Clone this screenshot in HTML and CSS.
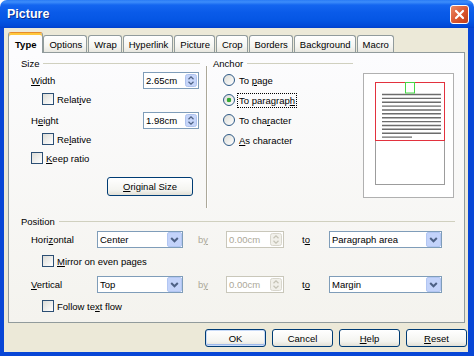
FILE: index.html
```html
<!DOCTYPE html>
<html>
<head>
	<link rel="stylesheet" href="styles.css">
</head>
<body>
	<div class="window">
		<div class="titlebar">
			<span class="title">Picture</span>
			<span class="closeBtn">
				<svg width="17" height="17" viewBox="0 0 17 17"><path d="M5 5L12 12M12 5L5 12" stroke="#fff" stroke-width="2.2" stroke-linecap="round"/></svg>
			</span>
		</div>

		<div class="frame">
			<div class="tabs">
				<div class="tab active">Type</div>
				<div class="tab">Options</div>
				<div class="tab">Wrap</div>
				<div class="tab">Hyperlink</div>
				<div class="tab">Picture</div>
				<div class="tab">Crop</div>
				<div class="tab">Borders</div>
				<div class="tab">Background</div>
				<div class="tab">Macro</div>
			</div>

			<div class="panel">
				<div class="topPart">
					<div class="sizeGroup">
						<div class="groupHead"><span>Size</span><span class="rule"></span></div>
						<div class="fieldRow firstField">
							<span class="fieldLabel"><u>W</u>idth</span>
							<div class="spin">
								<span>2.65cm</span>
								<svg width="12" height="13" viewBox="0 0 12 13"><rect x=".5" y=".5" width="11" height="12" rx="2" fill="#C6D5F9" stroke="#AEC2EE"/><path d="M3.5 5.2L6 2.8L8.5 5.2M3.5 7.8L6 10.2L8.5 7.8" fill="none" stroke="#4D6185" stroke-width="1.2"/></svg>
							</div>
						</div>
						<div class="check subCheck firstCheck"><span class="box"></span><span>Relat<u>i</u>ve</span></div>
						<div class="fieldRow secondField">
							<span class="fieldLabel">H<u>e</u>ight</span>
							<div class="spin">
								<span>1.98cm</span>
								<svg width="12" height="13" viewBox="0 0 12 13"><rect x=".5" y=".5" width="11" height="12" rx="2" fill="#C6D5F9" stroke="#AEC2EE"/><path d="M3.5 5.2L6 2.8L8.5 5.2M3.5 7.8L6 10.2L8.5 7.8" fill="none" stroke="#4D6185" stroke-width="1.2"/></svg>
							</div>
						</div>
						<div class="check subCheck firstCheck"><span class="box"></span><span>Re<u>l</u>ative</span></div>
						<div class="check ratioCheck"><span class="box"></span><span><u>K</u>eep ratio</span></div>
						<div class="btn origBtn"><span><u>O</u>riginal Size</span></div>
					</div>

					<div class="separator"></div>

					<div class="anchorGroup">
						<div class="groupHead"><span>Anchor</span><span class="rule"></span></div>
						<div class="radioRow"><span class="radio"></span><span>To <u>p</u>age</span></div>
						<div class="radioRow"><span class="radio on"></span><span class="focus">To paragrap<u>h</u></span></div>
						<div class="radioRow"><span class="radio"></span><span>To cha<u>r</u>acter</span></div>
						<div class="radioRow"><span class="radio"></span><span><u>A</u>s character</span></div>
					</div>

					<div class="preview">
						<svg width="89" height="123" viewBox="0 0 89 123">
							<rect x="11.5" y="8.5" width="69" height="102" fill="#fff" stroke="#9C9C9C"/>
							<path d="M18 20.5H77M18 24.4H77M18 28.2H77M18 32.1H77M18 36H77M18 39.8H77M18 43.7H77M18 47.6H77M18 51.5H77M18 55.3H77M18 59.2H77M18 63.1H48" stroke="#6C6C6C" stroke-width="1.4"/>
							<rect x="11.5" y="8.5" width="69" height="58" fill="none" stroke="#E2323E"/>
							<rect x="41.5" y="8.5" width="9" height="10.5" fill="none" stroke="#46D846"/>
						</svg>
					</div>
				</div>

				<div class="posGroup">
					<div class="groupHead"><span>Position</span><span class="rule"></span></div>
					<div class="posRow firstPos">
						<span class="posLabel">Hori<u>z</u>ontal</span>
						<div class="combo shortCombo">
							<span>Center</span>
							<svg width="15" height="15" viewBox="0 0 15 15"><rect x=".5" y=".5" width="14" height="14" rx="1.5" fill="#C3D3FA" stroke="#B2C6F2"/><path d="M4.2 6L7.5 9.3L10.8 6" fill="none" stroke="#4D6185" stroke-width="2"/></svg>
						</div>
						<span class="byLabel">b<u>y</u></span>
						<div class="spin disabled">
							<span>0.00cm</span>
							<svg width="12" height="13" viewBox="0 0 12 13"><rect x=".5" y=".5" width="11" height="12" rx="2" fill="#F1F0EA" stroke="#D8D6CC"/><path d="M3.5 5.2L6 2.8L8.5 5.2M3.5 7.8L6 10.2L8.5 7.8" fill="none" stroke="#C4C2B6" stroke-width="1.2"/></svg>
						</div>
						<span class="toLabel">t<u>o</u></span>
						<div class="combo longCombo">
							<span>Paragraph area</span>
							<svg width="15" height="15" viewBox="0 0 15 15"><rect x=".5" y=".5" width="14" height="14" rx="1.5" fill="#C3D3FA" stroke="#B2C6F2"/><path d="M4.2 6L7.5 9.3L10.8 6" fill="none" stroke="#4D6185" stroke-width="2"/></svg>
						</div>
					</div>
					<div class="check subCheck mirrorCheck"><span class="box"></span><span><u>M</u>irror on even pages</span></div>
					<div class="posRow secondPos">
						<span class="posLabel"><u>V</u>ertical</span>
						<div class="combo shortCombo">
							<span>Top</span>
							<svg width="15" height="15" viewBox="0 0 15 15"><rect x=".5" y=".5" width="14" height="14" rx="1.5" fill="#C3D3FA" stroke="#B2C6F2"/><path d="M4.2 6L7.5 9.3L10.8 6" fill="none" stroke="#4D6185" stroke-width="2"/></svg>
						</div>
						<span class="byLabel">b<u>y</u></span>
						<div class="spin disabled">
							<span>0.00cm</span>
							<svg width="12" height="13" viewBox="0 0 12 13"><rect x=".5" y=".5" width="11" height="12" rx="2" fill="#F1F0EA" stroke="#D8D6CC"/><path d="M3.5 5.2L6 2.8L8.5 5.2M3.5 7.8L6 10.2L8.5 7.8" fill="none" stroke="#C4C2B6" stroke-width="1.2"/></svg>
						</div>
						<span class="toLabel">t<u>o</u></span>
						<div class="combo longCombo">
							<span>Margin</span>
							<svg width="15" height="15" viewBox="0 0 15 15"><rect x=".5" y=".5" width="14" height="14" rx="1.5" fill="#C3D3FA" stroke="#B2C6F2"/><path d="M4.2 6L7.5 9.3L10.8 6" fill="none" stroke="#4D6185" stroke-width="2"/></svg>
						</div>
					</div>
					<div class="check subCheck followCheck"><span class="box"></span><span>Follow te<u>x</u>t flow</span></div>
				</div>
			</div>

			<div class="buttons">
				<div class="btn defaultBtn">OK</div>
				<div class="btn">Cancel</div>
				<div class="btn"><span><u>H</u>elp</span></div>
				<div class="btn"><span><u>R</u>eset</span></div>
			</div>
		</div>
	</div>
</body>
</html>
```

FILE: styles.css
```css
		body {
			margin: 0;
			background-color: white;
			font-family: "Liberation Sans", Arial, sans-serif;
			font-size: 9.5px;
			color: #000;
		}

		u {
			text-decoration-thickness: 1px;
			text-underline-offset: 1px;
		}

		.window {
			width: 474px;
			height: 356px;
			display: flex;
			flex-direction: column;
		}

		.titlebar {
			height: 28px;
			flex: none;
			display: flex;
			align-items: center;
			padding: 0 5px 0 7px;
			border-radius: 7px 7px 0 0;
			background: linear-gradient(to bottom, #2A7BF5 0, #3D8DFA 2px, #1466F0 5px, #0A5BE9 12px, #0556E4 20px, #024AD8 26px, #0041CC 28px);
		}

		.title {
			flex: 1;
			color: white;
			font-weight: bold;
			font-size: 12.5px;
			text-shadow: 1px 1px #0A2C8A;
		}

		.closeBtn {
			width: 19px;
			height: 19px;
			box-sizing: border-box;
			border: 1px solid #fff;
			border-radius: 3px;
			background: linear-gradient(135deg, #EC8A66, #D9552E 55%, #C13E18);
			display: flex;
			align-items: center;
			justify-content: center;
		}

		.frame {
			flex: 1;
			background-color: #ECE9D8;
			border: solid #0846D6;
			border-width: 0 6px 4px 4px;
			padding: 4px 0 0 4px;
			display: flex;
			flex-direction: column;
		}

		.tabs {
			height: 21px;
			display: flex;
			align-items: flex-end;
		}

		.tab {
			height: 18px;
			box-sizing: border-box;
			padding: 0 4px 0 5px;
			margin-right: 1px;
			border: 1px solid #919B9C;
			border-bottom: none;
			border-radius: 3px 3px 0 0;
			background: linear-gradient(to bottom, #FFFFFF, #F5F5F1 60%, #E6E5DD);
			display: flex;
			align-items: center;
		}

		.tab.active {
			height: 21px;
			padding: 2px 6px 0 6px;
			margin-right: 0;
			position: relative;
			z-index: 1;
			font-weight: bold;
			border-top: 1px solid #E68B2C;
			box-shadow: inset 0 2px 0 #FFC73C;
			background: #FCFCFE;
		}

		.panel {
			width: 457px;
			height: 271px;
			box-sizing: border-box;
			margin-top: -1px;
			border: 1px solid #919B9C;
			background: linear-gradient(to bottom, #FCFCFE, #F4F3EE);
			padding: 3px 0 0 12px;
		}

		.topPart {
			display: flex;
			height: 152px;
		}

		.groupHead {
			height: 14px;
			display: flex;
			align-items: center;
		}

		.rule {
			flex: 1;
			margin-left: 4px;
			border-top: 1px solid #D0D0BF;
		}

		.sizeGroup {
			width: 179px;
		}

		.fieldRow {
			height: 17px;
			display: flex;
			align-items: center;
			justify-content: space-between;
			padding-left: 10px;
			padding-right: 1px;
		}

		.firstField {
			margin-top: 2px;
		}

		.secondField {
			margin-top: 6px;
		}

		.spin {
			width: 56px;
			height: 17px;
			box-sizing: border-box;
			border: 1px solid #7F9DB9;
			background: white;
			display: flex;
			align-items: center;
			justify-content: space-between;
			padding: 0 1px 0 2px;
		}

		.spin.disabled {
			width: 58px;
			border-color: #C9C7BA;
			color: #ACA899;
		}

		.check {
			height: 14px;
			display: flex;
			align-items: center;
		}

		.box {
			width: 12px;
			height: 12px;
			box-sizing: border-box;
			border: 1px solid #2C4F74;
			background: linear-gradient(135deg, #DCDCD7, #FFFFFF);
			margin-right: 3px;
			flex: none;
		}

		.subCheck {
			padding-left: 21px;
		}

		.firstCheck {
			margin-top: 3px;
		}

		.ratioCheck {
			padding-left: 10px;
			margin-top: 5px;
		}

		.btn {
			width: 61px;
			height: 18px;
			box-sizing: border-box;
			border: 1px solid #003C74;
			border-radius: 3px;
			background: linear-gradient(to bottom, #FFFFFF, #F4F4F0 70%, #E2E0D6);
			display: flex;
			align-items: center;
			justify-content: center;
		}

		.origBtn {
			width: 86px;
			height: 19px;
			margin: 12px 0 0 86px;
		}

		.separator {
			margin: 10px 0 0 6px;
			border-left: 1px solid #ACA899;
			border-right: 1px solid #fff;
		}

		.anchorGroup {
			width: 140px;
			margin-left: 5px;
		}

		.radioRow {
			height: 20px;
			display: flex;
			align-items: center;
			padding-left: 10px;
		}

		.radio {
			width: 12px;
			height: 12px;
			box-sizing: border-box;
			border: 1px solid #2F5A86;
			border-radius: 50%;
			background: linear-gradient(135deg, #DCDCD7, #FFFFFF);
			margin-right: 4px;
			flex: none;
		}

		.radio.on {
			background: radial-gradient(circle, #35A935 0, #35A935 2px, transparent 2.6px), linear-gradient(135deg, #DCDCD7, #FFFFFF);
		}

		.focus {
			outline: 1px dotted #000;
			outline-offset: 1px;
		}

		.preview {
			width: 91px;
			height: 125px;
			box-sizing: border-box;
			border: 1px solid #B0B0B0;
			background: white;
			margin: 17px 0 0 10px;
		}

		.preview svg {
			display: block;
		}

		.posGroup {
			width: 434px;
		}

		.posGroup .groupHead {
			margin-top: 6px;
		}

		.posRow {
			height: 17px;
			display: flex;
			align-items: center;
			padding-left: 10px;
		}

		.firstPos {
			margin-top: 3px;
		}

		.secondPos {
			margin-top: 8px;
		}

		.posLabel {
			width: 66px;
		}

		.combo {
			height: 17px;
			box-sizing: border-box;
			border: 1px solid #7F9DB9;
			background: white;
			display: flex;
			align-items: center;
			justify-content: space-between;
			padding: 0 0 0 2px;
		}

		.shortCombo {
			width: 86px;
		}

		.longCombo {
			width: 113px;
		}

		.byLabel {
			width: 43px;
			box-sizing: border-box;
			padding-left: 15px;
			color: #ACA899;
		}

		.toLabel {
			width: 45px;
			box-sizing: border-box;
			padding-left: 18px;
		}

		.mirrorCheck {
			margin-top: 6px;
		}

		.followCheck {
			margin-top: 6px;
		}

		.buttons {
			display: flex;
			justify-content: flex-end;
			gap: 6px;
			margin-top: 6px;
			padding-right: 1px;
		}

		.defaultBtn {
			box-shadow: inset 0 0 0 1px #C9DBF8, inset 0 -1px 0 1px #9DB9EB;
		}
```
